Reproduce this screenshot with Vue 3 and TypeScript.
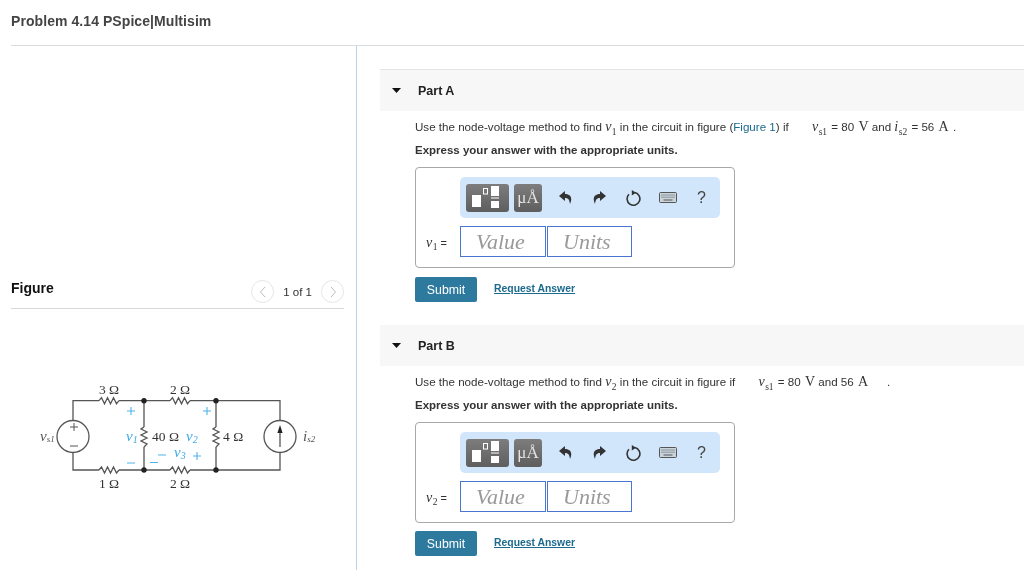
<script setup lang="ts">
interface Part {
  name: string
  sub: string
}
const parts: Part[] = [
  { name: 'Part A', sub: '1' },
  { name: 'Part B', sub: '2' },
]
const zig = (x: number, y: number) =>
  `M${x} ${y}l2.5 -3l3 6l3 -6l3 6l3 -6l3 6l2.5 -3`
const zigV = (x: number, y: number) =>
  `M${x} ${y}l-3 2l6 3l-6 3l6 3l-6 3l6 3l-3 3`
</script>

<template>
  <div class="page">
    <header class="top"><h1>Problem 4.14 PSpice|Multisim</h1></header>
    <div class="cols">
      <aside class="left">
        <div class="figure-head">
          <strong>Figure</strong>
          <div class="pager">
            <span class="round"><svg width="8" height="12" viewBox="0 0 8 12"><path d="M6 1L1.500 6L6 11" /></svg></span>
            <span class="count">1 of 1</span>
            <span class="round"><svg width="8" height="12" viewBox="0 0 8 12"><path d="M2 1L6.500 6L2 11" /></svg></span>
          </div>
        </div>
        <svg class="circuit" width="356" height="130" viewBox="0 370 356 130">
          <g fill="none" stroke="#555" stroke-width="1.300">
            <path d="M73 420V400.700H99M119 400.700H170M190 400.700H280V420M280 453V470H190M170 470H119M99 470H73V453" />
            <path d="M144 400.700V427M144 447V470M216 400.700V427M216 447V470" />
            <path :d="zig(99, 400.7)" />
            <path :d="zig(170, 400.7)" />
            <path :d="zig(99, 470)" />
            <path :d="zig(170, 470)" />
            <path :d="zigV(144, 427)" />
            <path :d="zigV(216, 427)" />
            <circle cx="73" cy="436.500" r="16" />
            <circle cx="280" cy="436.500" r="16" />
            <path d="M280 447V429" />
            <path d="M70 427h8M74 423v8M70 446h8" stroke-width="1" />
          </g>
          <path d="M280 425l-2.600 8h5.200z" fill="#222" />
          <g fill="#222">
            <circle cx="144" cy="400.700" r="2.700" />
            <circle cx="216" cy="400.700" r="2.700" />
            <circle cx="144" cy="470" r="2.700" />
            <circle cx="216" cy="470" r="2.700" />
          </g>
          <g class="ctext">
            <text x="109" y="394" text-anchor="middle">3 Ω</text>
            <text x="180" y="394" text-anchor="middle">2 Ω</text>
            <text x="109" y="488" text-anchor="middle">1 Ω</text>
            <text x="180" y="488" text-anchor="middle">2 Ω</text>
            <text x="152" y="441">40 Ω</text>
            <text x="223" y="441">4 Ω</text>
            <text x="40" y="441" class="it">v<tspan font-size="9" dy="1">s1</tspan></text>
            <text x="303" y="441" class="it">i<tspan font-size="9" dy="1">s2</tspan></text>
          </g>
          <g class="cblue">
            <text x="126" y="441" class="it">v<tspan font-size="10" dy="2">1</tspan></text>
            <text x="186" y="441" class="it">v<tspan font-size="10" dy="2">2</tspan></text>
            <text x="174" y="457" class="it">v<tspan font-size="10" dy="2">3</tspan></text>
          </g>
          <g stroke="#4fb4ea" stroke-width="1.100" fill="none">
            <path d="M127 411h8M131 407v8M127 463h8M150 462.500h8M158 455h8M193 456h8M197 452v8M203 411h8M207 407v8" />
          </g>
        </svg>
      </aside>

      <main class="right">
        <section v-for="part in parts" :key="part.name" class="part">
          <div class="part-bar">
            <svg class="caret" width="9" height="5" viewBox="0 0 9 5"><path d="M0 0h9L4.500 5z" /></svg>
            <span>{{ part.name }}</span>
          </div>
          <div class="part-body">
            <p class="prompt">
              Use the node-voltage method to find <i class="m">v<sub>{{ part.sub }}</sub></i>
              in the circuit in figure<template v-if="part.sub === '1'"> (<a class="fig-link">Figure 1</a>)</template> if
              <span class="vals">
                <i class="m gap">v<sub>s1</sub></i> = 80 <span class="unit">V</span> and
                <template v-if="part.sub === '1'"><i class="m gap">i<sub>s2</sub></i> = 56 <span class="unit">A</span> <span class="dot">.</span></template>
                <template v-else>56 <span class="unit">A</span><span class="dot wide">.</span></template>
              </span>
            </p>
            <p class="express">Express your answer with the appropriate units.</p>
            <div class="answer">
              <div class="toolbar">
                <span class="tbtn tpl">
                  <svg width="43" height="28" viewBox="0 0 43 28">
                    <rect x="6" y="11" width="9" height="12" fill="#fff" />
                    <rect x="17.500" y="4.500" width="4" height="5.500" fill="none" stroke="#fff" stroke-width="1" />
                    <rect x="25" y="2" width="8" height="10" fill="#fff" />
                    <rect x="25" y="13.500" width="8" height="1" fill="#fff" />
                    <rect x="25" y="17" width="8" height="7" fill="#fff" />
                  </svg>
                </span>
                <span class="tbtn unitbtn">μÅ</span>
                <svg class="ico undo" width="13" height="13" viewBox="0 0 13 13"><path d="M6 0L0 5l6 5V7c3 0 4.500 1.500 5 6 2.500-5 1.500-10-5-10z" fill="#333" /></svg>
                <svg class="ico redo" width="13" height="13" viewBox="0 0 13 13"><path d="M7 0l6 5-6 5V7c-3 0-4.500 1.500-5 6C-.5 8 .5 3 7 3z" fill="#333" /></svg>
                <svg class="ico reset" width="15" height="16" viewBox="0 0 15 16"><path d="M8.800 2.500A6.400 6.400 0 1 1 3 4.200" fill="none" stroke="#333" stroke-width="1.600" /><path d="M5.800 0l4.200 2.700-4.200 2.900z" fill="#333" /></svg>
                <svg class="ico kbd" width="18" height="11" viewBox="0 0 18 11"><rect x=".5" y=".5" width="17" height="10" rx="1" fill="#c9d4dd" stroke="#555" /><path d="M2.500 3h13M2.500 5.200h13" stroke="#555" stroke-dasharray="1 1" /><path d="M4.500 8h9" stroke="#555" /></svg>
                <span class="help">?</span>
              </div>
              <div class="fields">
                <span class="flabel"><i class="m">v<sub>{{ part.sub }}</sub></i> =</span>
                <span class="field">Value</span>
                <span class="field second">Units</span>
              </div>
            </div>
            <div class="actions">
              <button class="submit" type="button">Submit</button>
              <a class="request">Request Answer</a>
            </div>
          </div>
        </section>
      </main>
    </div>
  </div>
</template>

<style>
html, body { margin: 0; background: #fff; }
</style>

<style scoped>
.page {
  width: 1024px;
  height: 570px;
  overflow: hidden;
  font-family: "Liberation Sans", Arial, sans-serif;
  color: #222;
  background: #fff;
  filter: blur(.3px);
}
.top {
  height: 45px;
  margin-left: 11px;
  border-bottom: 1px solid #d9dde0;
}
h1 {
  margin: 0;
  padding-top: 13px;
  font-size: 14px;
  line-height: 16px;
  font-weight: 700;
  letter-spacing: .07px;
  color: #444;
}
.cols { display: flex; height: 524px; }
.left {
  width: 356px;
  flex: none;
  border-right: 1px solid #bcd0e4;
  padding-top: 233px;
}
.figure-head {
  margin-left: 11px;
  width: 333px;
  height: 29px;
  border-bottom: 1px solid #d6d9dc;
  display: flex;
  justify-content: space-between;
  align-items: flex-start;
}
.figure-head strong { font-size: 14px; line-height: 18px; color: #111; }
.pager { display: flex; align-items: center; font-size: 11.500px; color: #333; margin-top: 1px; }
.count { margin: 0 9px; }
.round {
  width: 23px;
  height: 23px;
  border: 1px solid #e4e6e8;
  border-radius: 50%;
  display: flex;
  align-items: center;
  justify-content: center;
  box-sizing: border-box;
}
.round path { fill: none; stroke: #b9bdc1; stroke-width: 1; }
.circuit { display: block; margin-top: 61px; filter: blur(.3px); }
.ctext text { font: 13.500px "Liberation Serif", serif; fill: #333; }
.cblue text { font: 15px "Liberation Serif", serif; fill: #3aa9e6; }
.ctext .it, .cblue .it { font-style: italic; }
.ctext .it { font-size: 15px; fill: #555; }
.right { flex: 1; padding: 23px 0 0 23px; min-width: 0; }
.part { height: 255px; }
.part-bar {
  height: 41px;
  border-top: 1px solid #e4e4e4;
  background: #f7f7f7;
  display: flex;
  align-items: center;
  font-size: 12.500px;
  font-weight: 700;
  color: #222;
}
.part:last-child .part-bar { border-top-color: #fff; }
.caret { margin: 0 17px 0 12px; }
.caret path { fill: #111; }
.part-body { padding: 8px 0 0 35px; }
.prompt {
  margin: 0;
  font-size: 11.600px;
  line-height: 14px;
  height: 16px;
  padding-top: 1px;
  white-space: nowrap;
  color: #333;
}
.m { font-family: "Liberation Serif", serif; font-style: italic; font-size: 14px; }
.gap { margin-right: 1px; }
sub { font-size: 9.500px; font-style: normal; line-height: 0; margin-left: .5px; }
.unit { font-family: "Liberation Serif", serif; font-size: 14px; margin-left: 1px; }
.vals { margin-left: 20px; }
.dot { margin-left: 1px; }
.dot.wide { margin-left: 19px; }
.fig-link { color: #1c6a8e; }
.express {
  margin: 7px 0 0;
  font-size: 11.500px;
  line-height: 14px;
  font-weight: 700;
  color: #333;
}
.answer {
  margin-top: 10px;
  width: 320px;
  height: 101px;
  border: 1px solid #a8a8a8;
  border-radius: 4px;
  box-sizing: border-box;
  padding: 9px 14px 0 44px;
}
.toolbar {
  height: 41px;
  width: 260px;
  background: #d1e5fb;
  border-radius: 5px;
  display: flex;
  align-items: center;
  padding-left: 6px;
  box-sizing: border-box;
}
.tbtn {
  height: 28px;
  border-radius: 3px;
  background: linear-gradient(#7d7d7d, #5e5e5e);
  box-sizing: border-box;
  display: flex;
  align-items: center;
  justify-content: center;
}
.tpl { width: 43px; }
.unitbtn {
  width: 28px;
  margin-left: 5px;
  font: 17px "Liberation Serif", serif;
  color: #e4e4e4;
}
.ico { flex: none; }
.undo { margin-left: 17px; }
.redo { margin-left: 21px; }
.reset { margin-left: 20px; }
.kbd { margin-left: 18px; }
.help { margin-left: 20px; font-size: 16px; color: #444; }
.fields { display: flex; align-items: center; margin-top: 8px; margin-left: -34px; }
.flabel { width: 34px; flex: none; font-size: 11px; color: #333; padding-top: 2px; }
.field {
  width: 86px;
  height: 31px;
  margin-right: 1px;
  border: 1px solid #4a75d0;
  box-sizing: border-box;
  font: italic 22px/29px "Liberation Serif", serif;
  color: #999;
  padding-left: 15px;
}
.second { width: 85px; }
.actions { display: flex; align-items: center; margin-top: 9px; }
.part:last-child .actions { margin-top: 8px; }
.submit {
  width: 62px;
  height: 25px;
  border: 0;
  border-radius: 2px;
  background: #2e7a9e;
  color: #fff;
  font: 12.300px "Liberation Sans", sans-serif;
  padding: 0;
}
.request {
  margin: 0 0 3px 17px;
  font-size: 10.400px;
  font-weight: 700;
  color: #1c6a8e;
  text-decoration: underline;
}
</style>
